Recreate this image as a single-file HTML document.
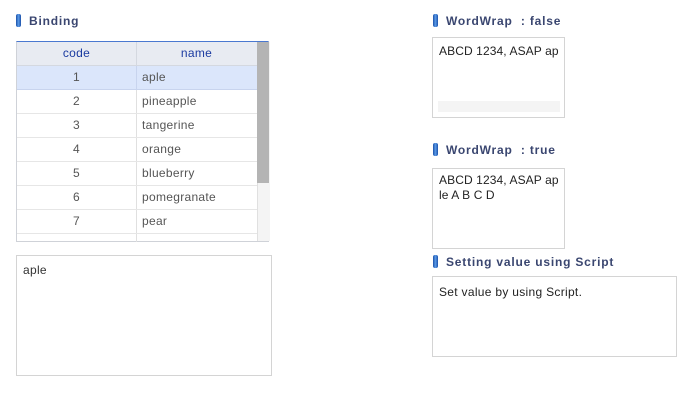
<!DOCTYPE html>
<html><head><meta charset="utf-8"><style>
body{margin:0;width:696px;height:405px;background:#fff;position:relative;overflow:hidden;font-family:"Liberation Sans","Noto Sans CJK KR",sans-serif;font-size:12px;color:#333;letter-spacing:0.3px}
.a{position:absolute}
.t{position:absolute;font-weight:bold;font-size:12px;color:#3a4670;line-height:14px;letter-spacing:0.8px}
.t i{position:absolute;left:-13px;top:0;width:5px;height:13px;border-radius:2px;background:linear-gradient(90deg,#1a4fa8,#5a9be8 50%,#1a4fa8)}
.box{position:absolute;border:1px solid #d4d4d4;background:#fff;box-sizing:border-box}
.row{position:absolute;left:0;width:240px;height:24px;border-bottom:1px solid #e6e6e6;box-sizing:border-box;line-height:23px;color:#555}
.row span{position:absolute}
.c1{left:0;width:119px;text-align:center;border-right:1px solid #e0e0e0;height:23px}
.c2{left:125px}
</style></head><body>
<div class="t" style="left:29px;top:14px"><i></i>Binding</div>
<div class="t" style="left:446px;top:14px"><i></i>WordWrap &nbsp;: false</div>
<div class="t" style="left:446px;top:143px"><i></i>WordWrap &nbsp;: true</div>
<div class="t" style="left:446px;top:255px"><i></i>Setting value using Script</div>

<div class="a" style="left:16px;top:41px;width:253px;height:201px;border:1px solid #cfd2d8;border-top:1px solid #4a78d0;box-sizing:border-box;background:#fff">
 <div class="row" style="top:0;background:#e8ebf2;color:#1a3aa0;border-bottom:1px solid #d4d8e0"><span class="c1" style="border-right-color:#d4d8e0">code</span><span class="c2" style="left:120px;width:119px;text-align:center">name</span></div>
 <div class="row" style="top:24px;background:#dbe6fb;border-bottom-color:#c8d4ee"><span class="c1" style="border-right-color:#c8d4ee">1</span><span class="c2">aple</span></div>
 <div class="row" style="top:48px"><span class="c1">2</span><span class="c2">pineapple</span></div>
 <div class="row" style="top:72px"><span class="c1">3</span><span class="c2">tangerine</span></div>
 <div class="row" style="top:96px"><span class="c1">4</span><span class="c2">orange</span></div>
 <div class="row" style="top:120px"><span class="c1">5</span><span class="c2">blueberry</span></div>
 <div class="row" style="top:144px"><span class="c1">6</span><span class="c2">pomegranate</span></div>
 <div class="row" style="top:168px"><span class="c1">7</span><span class="c2">pear</span></div>
 <div class="row" style="top:192px;border:none"><span class="c1" style="height:8px"></span></div>
 <div class="a" style="left:240px;top:0;width:12px;height:199px;background:#f4f4f4;border-left:1px solid #e0e0e0"></div>
 <div class="a" style="left:240px;top:0;width:12px;height:141px;background:#b4b4b4"></div>
</div>

<div class="box" style="left:16px;top:255px;width:256px;height:121px"><div class="a" style="left:6px;top:7px;color:#333">aple</div></div>
<div class="box" style="left:432px;top:37px;width:133px;height:81px"><div class="a" style="left:6px;top:6px;color:#222;white-space:nowrap;letter-spacing:0.1px">ABCD 1234, ASAP ap</div><div class="a" style="left:5px;top:63px;width:122px;height:11px;background:#f4f4f4"></div></div>
<div class="box" style="left:432px;top:168px;width:133px;height:81px"><div class="a" style="left:6px;top:4px;color:#222;line-height:15px;letter-spacing:0.1px">ABCD 1234, ASAP ap<br>le A B C D</div></div>
<div class="box" style="left:432px;top:276px;width:245px;height:81px"><div class="a" style="left:6px;top:8px;color:#222">Set value by using Script.</div></div>
</body></html>
